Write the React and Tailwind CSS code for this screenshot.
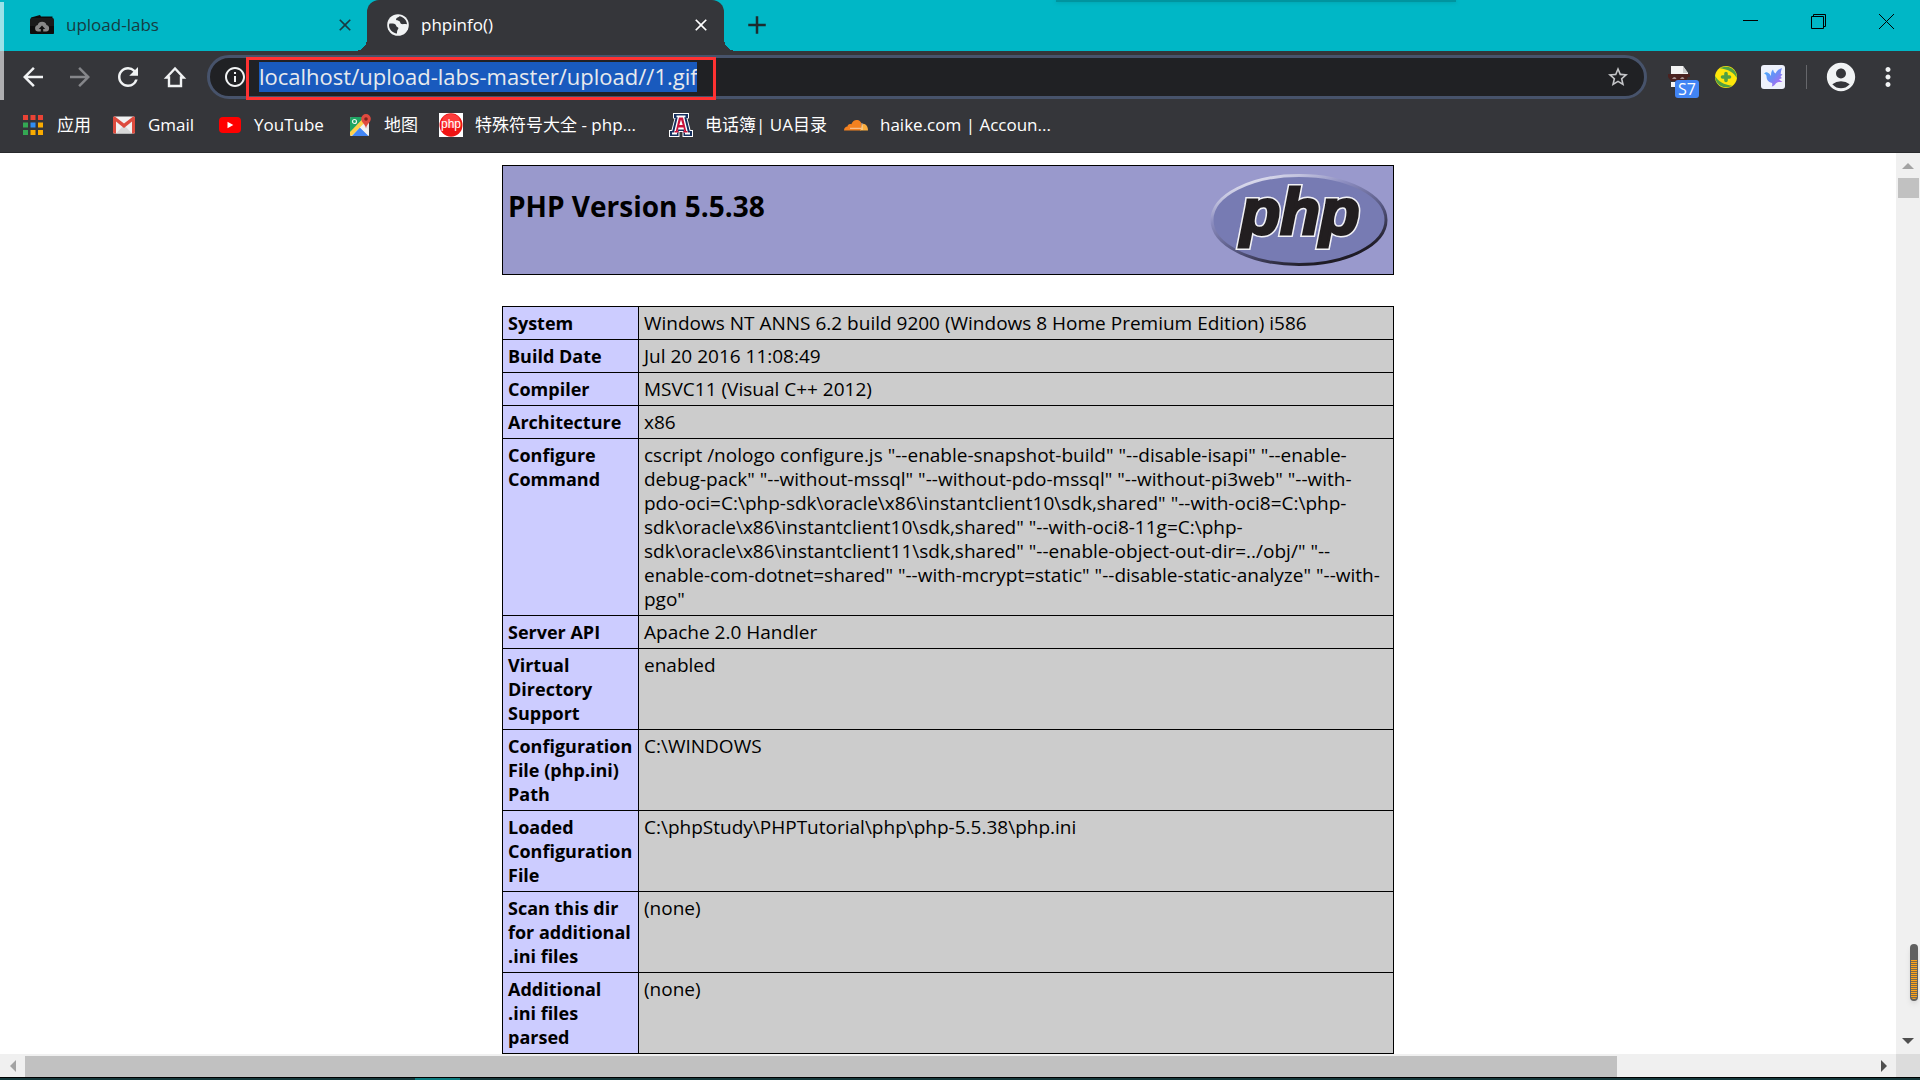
import {
  MdAccountCircle,
  MdAdd,
  MdArrowBack,
  MdArrowForward,
  MdClose,
  MdInfoOutline,
  MdMoreVert,
  MdRefresh,
  MdStarBorder,
} from 'react-icons/md';

const bookmarks = [
  { label: '应用', icon: <AppsIcon />, width: 'w-[91px]' },
  { label: 'Gmail', icon: <GmailIcon />, width: 'w-[106px]' },
  { label: 'YouTube', icon: <YouTubeIcon />, width: 'w-[130px]' },
  { label: '地图', icon: <MapsIcon />, width: 'w-[91px]' },
  { label: '特殊符号大全 - php...', icon: <PhpBallIcon />, width: 'w-[230px]' },
  { label: '电话簿| UA目录', icon: <ArizonaIcon />, width: 'w-[175px]' },
  { label: 'haike.com | Accoun...', icon: <CloudIcon />, width: 'w-[220px]' },
];

const rows = [
  ['System', 'Windows NT ANNS 6.2 build 9200 (Windows 8 Home Premium Edition) i586'],
  ['Build Date', 'Jul 20 2016 11:08:49'],
  ['Compiler', 'MSVC11 (Visual C++ 2012)'],
  ['Architecture', 'x86'],
  [
    ['Configure', 'Command'],
    [
      'cscript /nologo configure.js "--enable-snapshot-build" "--disable-isapi" "--enable-',
      'debug-pack" "--without-mssql" "--without-pdo-mssql" "--without-pi3web" "--with-',
      'pdo-oci=C:\\php-sdk\\oracle\\x86\\instantclient10\\sdk,shared" "--with-oci8=C:\\php-',
      'sdk\\oracle\\x86\\instantclient10\\sdk,shared" "--with-oci8-11g=C:\\php-',
      'sdk\\oracle\\x86\\instantclient11\\sdk,shared" "--enable-object-out-dir=../obj/" "--',
      'enable-com-dotnet=shared" "--with-mcrypt=static" "--disable-static-analyze" "--with-',
      'pgo"',
    ],
  ],
  ['Server API', 'Apache 2.0 Handler'],
  [['Virtual', 'Directory', 'Support'], 'enabled'],
  [['Configuration', 'File (php.ini)', 'Path'], 'C:\\WINDOWS'],
  [['Loaded', 'Configuration', 'File'], 'C:\\phpStudy\\PHPTutorial\\php\\php-5.5.38\\php.ini'],
  [['Scan this dir', 'for additional', '.ini files'], '(none)'],
  [['Additional', '.ini files', 'parsed'], '(none)'],
];

function AppsIcon() {
  const colors = [
    '#ea4335', '#ea4335', '#ea4335',
    '#34a853', '#2f8df5', '#f9ab00',
    '#34a853', '#f9ab00', '#f9ab00',
  ];
  return (
    <svg className="w-6 h-6" viewBox="0 0 24 24">
      {colors.map((c, i) => (
        <rect key={i} x={2 + (i % 3) * 7.5} y={2 + Math.floor(i / 3) * 7.5} width="5" height="5" fill={c} />
      ))}
    </svg>
  );
}

function GmailIcon() {
  return (
    <svg className="w-6 h-6" viewBox="0 0 24 24">
      <rect x="1" y="3.5" width="22" height="17" rx="1.5" fill="#f1f1f1" />
      <path d="M4 20.500 12 12l8 8.500z" fill="#d8d8d8" />
      <path d="M1 5v14a1.500 1.500 0 0 0 1.500 1.500H4V8.500l8 6.500 8-6.500v12h1.500A1.500 1.500 0 0 0 23 19V5c0-1.500-1.500-1.700-2.500-1L12 10.500 3.500 4C2.500 3.300 1 3.500 1 5z" fill="#dd4b3e" />
    </svg>
  );
}

function YouTubeIcon() {
  return (
    <svg className="w-6 h-6" viewBox="0 0 24 24">
      <rect x="1" y="4" width="22" height="16" rx="4" fill="#f00" />
      <path d="M9.500 8.800v6.400l5.800-3.200z" fill="#fff" />
    </svg>
  );
}

function MapsIcon() {
  return (
    <svg className="w-6 h-6" viewBox="0 0 24 24">
      <rect x="2" y="4" width="19" height="19" rx="1.500" fill="#e8e8e8" />
      <path d="M2 5.500A1.500 1.500 0 0 1 3.500 4H17L2 20z" fill="#1fa463" />
      <path d="M2 19 15.500 5l3 3L4 22.500H2z" fill="#ffd04b" />
      <path d="M4 23 12 14.500 20.500 23z" fill="#4286f5" />
      <path d="m12 14.500 3-3 6 6V23z" fill="#f2f2f2" />
      <circle cx="6.500" cy="8.500" r="2" fill="none" stroke="#e6f5ec" strokeWidth="1.200" />
      <path d="M18 1a4.800 4.800 0 0 0-4.800 4.800c0 4 4 4.700 4.800 9.700.8-5 4.800-5.700 4.800-9.700A4.800 4.800 0 0 0 18 1z" fill="#e04a3f" />
      <circle cx="18" cy="6" r="1.800" fill="#7d231c" />
    </svg>
  );
}

function PhpBallIcon() {
  return (
    <svg className="w-6 h-6" viewBox="0 0 24 24">
      <rect width="24" height="24" fill="#fff" />
      <ellipse cx="12" cy="12" rx="11.500" ry="11.800" fill="#f01414" />
      <ellipse cx="12" cy="8" rx="9" ry="7" fill="#ff3c3c" />
      <text x="12" y="15" textAnchor="middle" fontSize="12" fontFamily="Liberation Sans" fill="#fff">php</text>
    </svg>
  );
}

function ArizonaIcon() {
  return (
    <svg className="w-6 h-6" viewBox="0 0 24 24">
      <path d="M4 0h16v5.500h-1.500L21.500 17H24v7H13.500v-5h-3v5H0v-7h2.500L5.500 5.500H4z" fill="#fff" />
      <path d="M5 1h14v4h-1.500l3.200 13H23v5h-8.500v-5h-5v5H1v-5h2.300L6.500 5H5z" fill="#16305f" />
      <path d="M7.500 2.500h9v1.700h-1.200L19 19.500h2v2h-5v-2h-1v-3H9v3H8v2H3v-2h2L8.700 4.200H7.500z" fill="#fff" />
      <path d="M10 4.500h4l3.200 13.500h1.300v1.500h-4V18h.8l-.8-3.500h-5L8.700 18h.8v1.500h-4V18h1.300z" fill="#c8103a" />
      <path d="M10.300 12h3.400L12 6.500z" fill="#fff" />
    </svg>
  );
}

function CloudIcon() {
  return (
    <svg className="w-6 h-6" viewBox="0 0 24 24">
      <path d="M0 17.500c0-2.300 1.400-3.700 3.500-3.900.1-2 2-3.200 3.800-2.300C8.600 8 11 6.500 13.500 7c3 .5 4.500 3.200 4.200 6l-1 4.500z" fill="#f48120" />
      <path d="M16 17.500l2.600-6.700c3.200-.4 5.400 2.700 5.400 6.700z" fill="#faad3f" />
      <path d="M6 15.300h11M18 10v7" stroke="#fff" strokeWidth=".8" opacity=".75" />
    </svg>
  );
}

function CloudFolderIcon() {
  return (
    <svg className="w-6 h-6" viewBox="0 0 24 24">
      <path d="M1 4.500 10 2l1 1.500h11.500V8H1z" fill="#0c0c0c" />
      <rect y="5" width="24" height="16" rx="1.500" fill="#1b1b1b" />
      <path d="M0 13h24v6.500a1.500 1.500 0 0 1-1.500 1.500h-21A1.500 1.500 0 0 1 0 19.500z" fill="#0d0d0d" />
      <path d="M8 18.500a3.300 3.300 0 0 1-.3-6.500 4.600 4.600 0 0 1 8.800 0 3.300 3.300 0 0 1-.3 6.500z" fill="#888" />
      <path d="m12 12.500 3.200 3.500h-2v4.500h-2.400V16h-2z" fill="#111" />
    </svg>
  );
}

function GlobeIcon() {
  return (
    <svg className="w-[22px] h-[22px]" viewBox="0 0 22 22">
      <circle cx="11" cy="11" r="10.800" fill="#f1f3f4" />
      <path d="M2.500 9.500c2 .2 4.500-.2 6 1 .8.800.500 2 1.700 2.400 1.400.3 1.600 1.500.6 2.600-.7.800-.8 2.300-.8 4C5.500 19 2 15.500 2 11zM12.500 2.200c-.7 1.300-3.300 1.200-3.500 3-.1 1.500 2.400 1 3.500 2 1 1 .500 2.300 2 2.800 1.500.400 2.800-.2 5.500.3C19.700 6 16.500 2.800 12.500 2.200z" fill="#35363a" />
    </svg>
  );
}

function HomeIcon() {
  return (
    <svg className="w-6 h-6" viewBox="0 0 24 24">
      <path d="M12 3.500 3.500 12.500H6V21h12v-8.500h2.500z" fill="none" stroke="#f1f3f4" strokeWidth="2.400" />
    </svg>
  );
}

function MaskIcon() {
  return (
    <svg className="w-6 h-6" viewBox="0 0 24 24">
      <path d="M4 1h12l5 7v2H4z" fill="#f3f3f3" />
      <path d="M16 1v7h5z" fill="#c8c8c8" />
      <path d="M1 9h22v3h-2l-2 4H4l-3-4z" fill="#4a211f" />
      <path d="M5 13.500c1.500-1.500 3.500-1.500 4.500 0zM13 13.500c1.500-1.500 3.500-1.500 4.500 0z" fill="#fff" />
      <rect x="4" y="17" width="5" height="5" fill="#f3f3f3" />
    </svg>
  );
}

function PlusBallIcon() {
  return (
    <svg className="w-6 h-6" viewBox="0 0 24 24">
      <circle cx="12" cy="12" r="11" fill="#fee60a" />
      <path d="M6 3.200C12 0 18 2 21 6.500c1.500 2.500 2 4.500 1.700 6.500C20 7.500 14 4.200 6 3.200zM18 20.800c-6 3.200-12 1.200-15-3.300-1.500-2.500-2-4.500-1.700-6.500C4 16.500 10 19.800 18 20.800z" fill="#50a044" />
      <path d="M12 8.500v7M8.500 12h7" stroke="#50a044" strokeWidth="3.600" strokeLinecap="round" />
    </svg>
  );
}

function BirdIcon() {
  return (
    <svg className="w-6 h-6" viewBox="0 0 24 24">
      <defs>
        <linearGradient id="bird" x1="0" y1="0" x2="1" y2="1">
          <stop offset="0" stopColor="#3fb2ff" />
          <stop offset=".5" stopColor="#6e8cf5" />
          <stop offset="1" stopColor="#c55cf2" />
        </linearGradient>
      </defs>
      <rect width="24" height="24" rx="3" fill="#eef1fb" />
      <path d="M3 8.500C4.500 7.500 5 7 6.500 7.500c2 .7 2.500 2 3.500 3.500 0-3 0-4.500 2-6.500.5 2 1.200 3 2.500 4 1.800-3 3.500-4.500 6.500-5.500-.8 2-1 3.500-1.300 6l1.800.3-2 2.500 1.500 1.200-3 1.500 3.500 2.500c-3.500-.3-5 0-6.500 1.200-1 1.500-2 2.800-4.200 3.300.6-1.500.7-2.500.2-3.500C7 17 5.500 14.500 5.500 11c-.2-1.200-1-2-2.500-2.500z" fill="url(#bird)" />
    </svg>
  );
}

function PhpLogo() {
  const text = {
    x: 91,
    y: 64,
    textAnchor: 'middle',
    fontFamily: 'Liberation Sans',
    fontWeight: 'bold',
    fontStyle: 'italic',
    fontSize: 65,
    strokeLinejoin: 'miter',
  };
  return (
    <svg className="w-[180px] h-[100px]" viewBox="0 0 180 100" role="img" aria-label="PHP logo">
      <defs>
        <linearGradient id="rim" x1=".2" y1="0" x2=".8" y2="1">
          <stop offset="0" stopColor="#ececf6" />
          <stop offset=".3" stopColor="#8c8dc0" />
          <stop offset=".6" stopColor="#55567f" />
          <stop offset=".9" stopColor="#1f1c26" />
        </linearGradient>
      </defs>
      <ellipse cx="90" cy="50" rx="87" ry="44.500" fill="#777bb3" stroke="url(#rim)" strokeWidth="3" />
      <text {...text} fill="#221e20" stroke="#f2f2f6" strokeWidth="6" paintOrder="stroke">php</text>
      <text {...text} fill="#221e20" stroke="#221e20" strokeWidth="3" aria-hidden="true">php</text>
    </svg>
  );
}

function TabStrip() {
  return (
    <header className="relative flex h-[51px] shrink-0 bg-[#00b7c6] text-[17px]">
      {/* Shadow of the panel docked above the screen */}
      <div className="absolute left-[55%] top-0 h-[2px] w-[400px] bg-[#00949f] shadow-[0_0_4px_#00949f]" />

      <div className="flex w-[367px] items-center pb-px pl-[30px] pr-3 text-[#173c42]">
        <CloudFolderIcon />
        <span className="ml-3 flex-1">upload-labs</span>
        <button aria-label="Close upload-labs"><MdClose size={20} /></button>
      </div>
      <div className="relative flex w-[357px] items-center rounded-t-[12px] bg-[#35363a] pb-px pl-5 pr-[13px] text-white">
        <span className="absolute bottom-0 right-full h-3 w-3 bg-[radial-gradient(circle_at_0_0,#00b7c6_12px,#35363a_12px)]" />
        <span className="absolute bottom-0 left-full h-3 w-3 bg-[radial-gradient(circle_at_100%_0,#00b7c6_12px,#35363a_12px)]" />
        <GlobeIcon />
        <span className="ml-3 flex-1">phpinfo()</span>
        <button aria-label="Close phpinfo()"><MdClose size={20} /></button>
      </div>
      <button aria-label="New tab" className="ml-[18px] pb-px text-[#1c2b2e]"><MdAdd size={30} /></button>

      <div className="ml-auto flex h-[43px] text-black">
        <button aria-label="Minimize" className="flex w-[68px] items-center justify-center">
          <svg className="h-4 w-4" viewBox="0 0 16 16"><path d="M1 6.500h15" stroke="currentColor" /></svg>
        </button>
        <button aria-label="Restore" className="flex w-[68px] items-center justify-center">
          <svg className="h-4 w-4" viewBox="0 0 16 16" fill="none" stroke="currentColor">
            <path d="M1.500 2.500h12v12h-12zM3.500 2.500v-2h12v12h-2" />
          </svg>
        </button>
        <button aria-label="Close" className="flex w-[68px] items-center justify-center">
          <svg className="h-4 w-4" viewBox="0 0 16 16"><path d="m1 0 15 15M16 0 1 15" stroke="currentColor" /></svg>
        </button>
      </div>
    </header>
  );
}

function Toolbar() {
  const button = 'flex w-[47px] shrink-0 justify-center';
  return (
    <div className="flex h-[52px] shrink-0 items-center bg-[#35363a] px-[9px] text-[#f1f3f4]">
      <button aria-label="Back" className={button}><MdArrowBack size={30} /></button>
      <button aria-label="Forward" className="flex w-12 shrink-0 justify-center text-[#85868a]"><MdArrowForward size={30} /></button>
      <button aria-label="Reload" className={button}><MdRefresh size={30} /></button>
      <button aria-label="Home" className={button}><HomeIcon /></button>

      <div className="relative ml-[9px] mr-2 flex h-11 flex-1 items-center rounded-full border-[3px] border-[#47536b] bg-[#202124] pl-[13px] pr-[14px]">
        <MdInfoOutline size={24} />
        <input
          aria-label="Address"
          className="ml-3 h-[30px] w-[438px] bg-[#195abe] pb-[2px] text-[22px] text-[#e8eaed] outline-none"
          defaultValue="localhost/upload-labs-master/upload//1.gif"
        />
        <button aria-label="Bookmark this page" className="ml-auto text-[#c4c5c8]"><MdStarBorder size={24} /></button>
        <div className="absolute -top-px left-9 h-[43px] w-[470px] border-[3px] border-[#ff3232]" />
      </div>

      <button aria-label="S7" className={`${button} relative`}>
        <MaskIcon />
        <span className="absolute left-5 top-[15px] w-6 rounded-[3px] bg-[#4285f4] text-center text-[16px] leading-[18px] text-white">S7</span>
      </button>
      <button aria-label="Extension" className={button}><PlusBallIcon /></button>
      <button aria-label="Bird extension" className={button}><BirdIcon /></button>
      <div className="mx-[10px] h-6 w-px bg-[#66676b]" />
      <button aria-label="Profile" className={button}><MdAccountCircle size={34} /></button>
      <button aria-label="Menu" className={button}><MdMoreVert size={30} /></button>
    </div>
  );
}

function BookmarksBar() {
  return (
    <nav className="flex h-[50px] shrink-0 items-center border-b border-[#28292c] bg-[#35363a] pb-[6px] pl-[21px] text-[17px] text-white">
      {bookmarks.map((b) => (
        <a key={b.label} href="#" className={`${b.width} flex shrink-0 items-center gap-3 whitespace-nowrap`}>
          {b.icon}
          {b.label}
        </a>
      ))}
    </nav>
  );
}

function Lines({ text }) {
  if (!Array.isArray(text)) return text;
  return text.map((line) => (
    <span key={line} className="block whitespace-nowrap">{line}</span>
  ));
}

function PhpInfo() {
  return (
    <main className="min-w-0 flex-1 overflow-hidden bg-white pt-3 text-black">
      <div className="mx-auto flex h-[110px] w-[892px] items-start justify-between border border-black bg-[#9999cc] py-1 pl-[5px] pr-1">
        <h1 className="pt-[18px] text-[28px] font-bold leading-9">PHP Version 5.5.38</h1>
        <PhpLogo />
      </div>

      <table className="mx-auto mt-[31px] w-[892px] table-fixed border-collapse text-[18px] leading-6">
        <tbody>
          {rows.map(([name, value]) => (
            <tr key={String(name)} className="align-top">
              <th scope="row" className="w-[136px] whitespace-nowrap border border-black bg-[#ccccff] px-[5px] py-1 text-left font-bold">
                <Lines text={name} />
              </th>
              <td className="border border-black bg-[#cccccc] px-[5px] py-1 text-[19px] leading-6">
                <Lines text={value} />
              </td>
            </tr>
          ))}
        </tbody>
      </table>
    </main>
  );
}

function Arrow({ d, className }) {
  return (
    <svg className="h-3 w-3 shrink-0" viewBox="0 0 12 12">
      <path d={d} className={className} />
    </svg>
  );
}

export default function App() {
  return (
    <div className="relative flex h-screen flex-col overflow-hidden font-['Open_Sans','Noto_Sans_CJK_SC',sans-serif]">
      <TabStrip />
      <Toolbar />
      <BookmarksBar />

      <div className="flex min-h-0 flex-1">
        <PhpInfo />
        <div className="flex w-6 shrink-0 flex-col items-center bg-[#f0f0f0] py-[7px]">
          <Arrow d="M0 9h12L6 3z" className="fill-[#a3a3a3]" />
          <div className="mt-[6px] h-5 w-[21px] bg-[#c1c1c1]" />
          <div className="mt-auto"><Arrow d="M0 3h12L6 9z" className="fill-[#505050]" /></div>
        </div>
      </div>

      <div className="flex h-[23px] shrink-0 bg-[#f0f0f0]">
        <div className="flex w-[25px] items-center justify-center"><Arrow d="M9 0v12L3 6z" className="fill-[#a3a3a3]" /></div>
        <div className="flex-1 pt-[2px]"><div className="h-full w-[86.2%] bg-[#c1c1c1]" /></div>
        <div className="flex w-6 items-center justify-center"><Arrow d="M3 0v12l6-6z" className="fill-[#505050]" /></div>
        <div className="w-6 bg-[#dcdcdc]" />
      </div>
      <div className="h-[3px] shrink-0 border-t border-black bg-[#15383b] pl-[415px]">
        <div className="h-full w-[45px] bg-[#0c7c80]" />
      </div>

      {/* Floating desktop widgets */}
      <div className="absolute left-0 top-[2px] h-[98px] w-1 bg-white/60" />
      <div className="absolute bottom-[79px] right-[2px] h-[57px] w-2 rounded-full bg-[#606060] px-px pb-[2px] pt-4 shadow-md">
        <div className="h-full rounded-b-full bg-[repeating-linear-gradient(#ffa31a_0_1px,#7a6a4d_1px_2px)]" />
      </div>
    </div>
  );
}
